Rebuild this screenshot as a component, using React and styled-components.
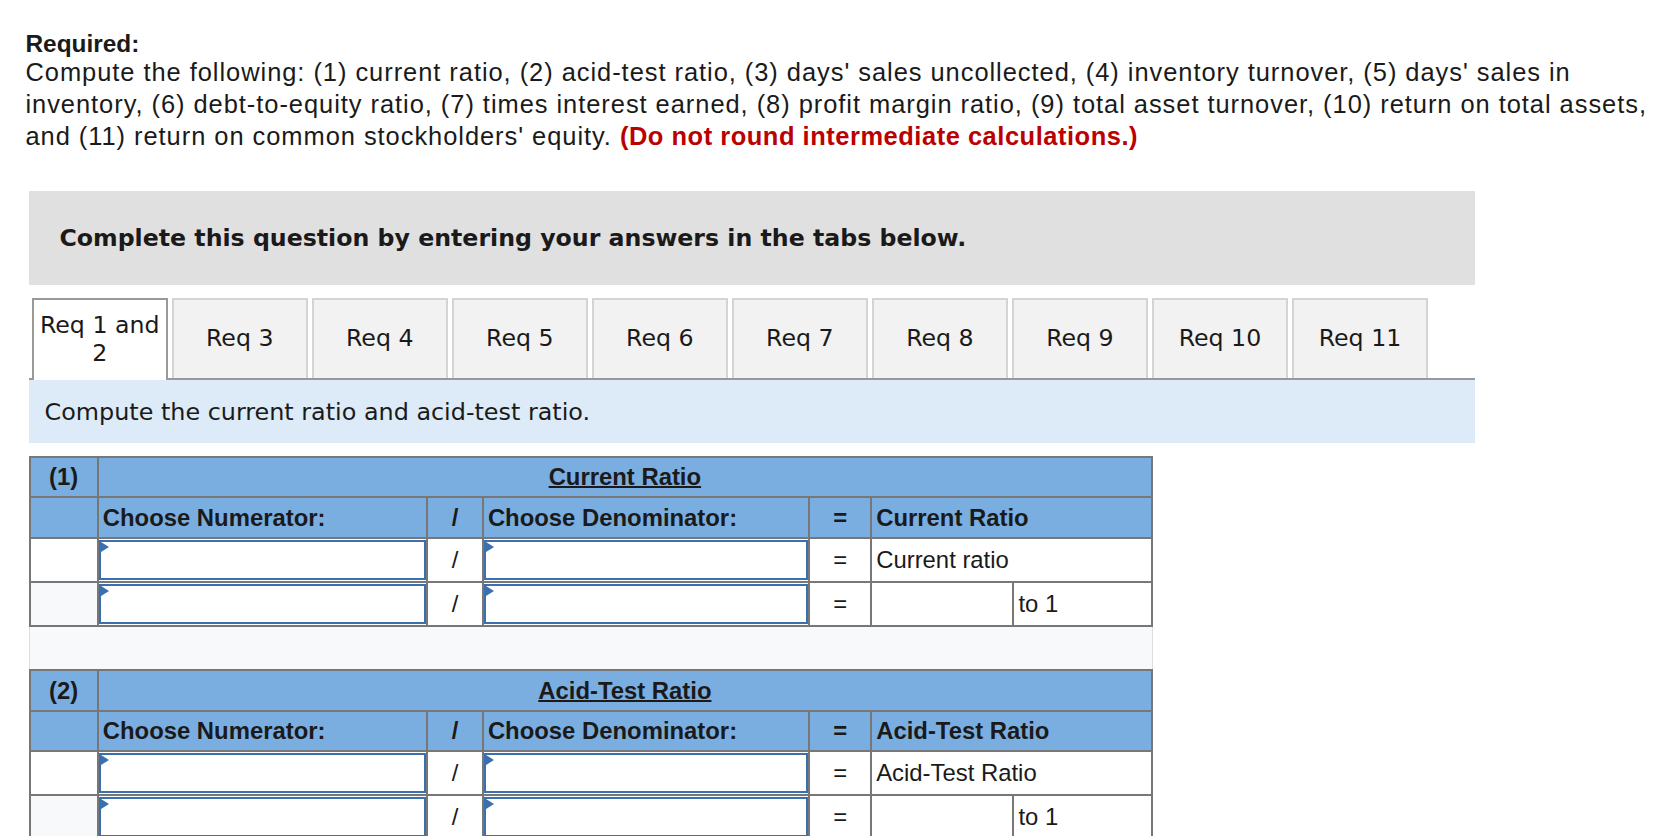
import React from "react";
import styled, { createGlobalStyle } from "styled-components";

const Global = createGlobalStyle`
  body { margin: 0; background: #fff; color: #1a1a1a; font-family: "Liberation Sans", Arial, sans-serif; }
`;

const Page = styled.div`
  zoom: 1.061;
  padding: 28px 24px;
  width: 1380px;
`;

const Title = styled.div`
  font-weight: bold;
  font-size: 23px;
  line-height: 26px;
`;

const Para = styled.p`
  margin: 0;
  font-size: 24px;
  letter-spacing: 0.9px;
  line-height: 30px;
  width: 1560px;
  span { color: #b00; font-weight: bold; letter-spacing: 0.5px; }
`;

const Banner = styled.div`
  margin: 36px 0 0 3px;
  width: 1363px;
  height: 89px;
  background: #e0e0e0;
  display: flex;
  align-items: center;
  padding-left: 29px;
  box-sizing: border-box;
  font-family: "DejaVu Sans", Verdana, sans-serif;
  font-weight: bold;
  font-size: 22.3px;
`;

const Tabs = styled.div`
  margin: 12px 0 0 3px;
  width: 1363px;
  display: flex;
  gap: 4px;
  padding-left: 3px;
  box-sizing: border-box;
  border-bottom: 2px solid #999;
`;

const Tab = styled.div`
  width: 128px;
  box-sizing: border-box;
  border: 2px solid ${p => (p.$active ? "#999" : "#d4d4d4")};
  border-bottom: none;
  background: ${p => (p.$active ? "#fff" : "#f2f2f2")};
  margin-bottom: ${p => (p.$active ? "-2px" : "0")};
  height: ${p => (p.$active ? "77px" : "75px")};
  display: flex;
  align-items: center;
  justify-content: center;
  text-align: center;
  font-family: "DejaVu Sans", Verdana, sans-serif;
  font-size: 22.3px;
  line-height: 26px;
  padding: 0 2px;
`;

const Instruction = styled.div`
  margin-left: 3px;
  width: 1363px;
  height: 60px;
  background: #dcebf7;
  display: flex;
  align-items: center;
  padding-left: 15px;
  box-sizing: border-box;
  font-family: "DejaVu Sans", Verdana, sans-serif;
  font-size: 22.5px;
`;

const Table = styled.table`
  margin: 12px 0 0 3px;
  border-collapse: collapse;
  font-size: 22.5px;
  table-layout: fixed;
  width: 1058px;
`;

const Cell = styled.td`
  border: 2px solid #777;
  height: ${p => p.$h || 34}px;
  padding: 0 4px;
  background: ${p => (p.$head ? "#7aaee0" : p.$soft ? "#f7f9fb" : "#fff")};
  font-weight: ${p => (p.$bold ? "bold" : "normal")};
  text-align: ${p => p.$align || "left"};
  box-sizing: border-box;
  white-space: nowrap;
  overflow: hidden;
  u { text-decoration-thickness: 2px; }
`;

const InputCell = styled.td`
  border: 2px solid #777;
  padding: 0;
`;

const Box = styled.div`
  height: 34px;
  margin: 1px 0;
  border: 2px solid #3a6fb0;
  background: #fff;
  position: relative;
  &::before {
    content: "";
    position: absolute;
    left: 0;
    top: 0;
    border-left: 8px solid #3a6fb0;
    border-top: 5px solid transparent;
    border-bottom: 5px solid transparent;
  }
`;

const Spacer = styled.td`
  border: 2px solid #777;
  border-left: 1px solid #ddd;
  border-right: 1px solid #ddd;
  height: 38px;
  background: #f7f9fb;
`;

const Section = ({ num, title, result, resultLabel }) => (
  <>
    <tr>
      <Cell $head $bold $align="center" $h={38}>{num}</Cell>
      <Cell $head $bold $align="center" colSpan={6}><u>{title}</u></Cell>
    </tr>
    <tr>
      <Cell $head $h={38}></Cell>
      <Cell $head $bold>Choose Numerator:</Cell>
      <Cell $head $bold $align="center">/</Cell>
      <Cell $head $bold>Choose Denominator:</Cell>
      <Cell $head $bold $align="center">=</Cell>
      <Cell $head $bold colSpan={2}>{result}</Cell>
    </tr>
    <tr>
      <Cell $h={38}></Cell>
      <InputCell><Box /></InputCell>
      <Cell $align="center">/</Cell>
      <InputCell><Box /></InputCell>
      <Cell $align="center">=</Cell>
      <Cell colSpan={2}>{resultLabel}</Cell>
    </tr>
    <tr>
      <Cell $soft $h={38}></Cell>
      <InputCell><Box /></InputCell>
      <Cell $align="center">/</Cell>
      <InputCell><Box /></InputCell>
      <Cell $align="center">=</Cell>
      <Cell></Cell>
      <Cell>to 1</Cell>
    </tr>
  </>
);

const tabs = ["Req 3", "Req 4", "Req 5", "Req 6", "Req 7", "Req 8", "Req 9", "Req 10", "Req 11"];

export default function App() {
  return (
    <Page>
      <Global />
      <Title>Required:</Title>
      <Para>
        Compute the following: (1) current ratio, (2) acid-test ratio, (3) days' sales uncollected, (4) inventory turnover, (5) days' sales in
        <br />
        inventory, (6) debt-to-equity ratio, (7) times interest earned, (8) profit margin ratio, (9) total asset turnover, (10) return on total assets,
        <br />
        and (11) return on common stockholders' equity. <span>(Do not round intermediate calculations.)</span>
      </Para>
      <Banner>Complete this question by entering your answers in the tabs below.</Banner>
      <Tabs>
        <Tab $active>Req 1 and 2</Tab>
        {tabs.map(t => <Tab key={t}>{t}</Tab>)}
      </Tabs>
      <Instruction>Compute the current ratio and acid-test ratio.</Instruction>
      <Table>
        <colgroup>
          <col style={{ width: 64 }} />
          <col style={{ width: 311 }} />
          <col style={{ width: 52 }} />
          <col style={{ width: 308 }} />
          <col style={{ width: 58 }} />
          <col style={{ width: 134 }} />
          <col style={{ width: 131 }} />
        </colgroup>
        <tbody>
          <Section num="(1)" title="Current Ratio" result="Current Ratio" resultLabel="Current ratio" />
          <tr><Spacer colSpan={7} /></tr>
          <Section num="(2)" title="Acid-Test Ratio" result="Acid-Test Ratio" resultLabel="Acid-Test Ratio" />
        </tbody>
      </Table>
    </Page>
  );
}
